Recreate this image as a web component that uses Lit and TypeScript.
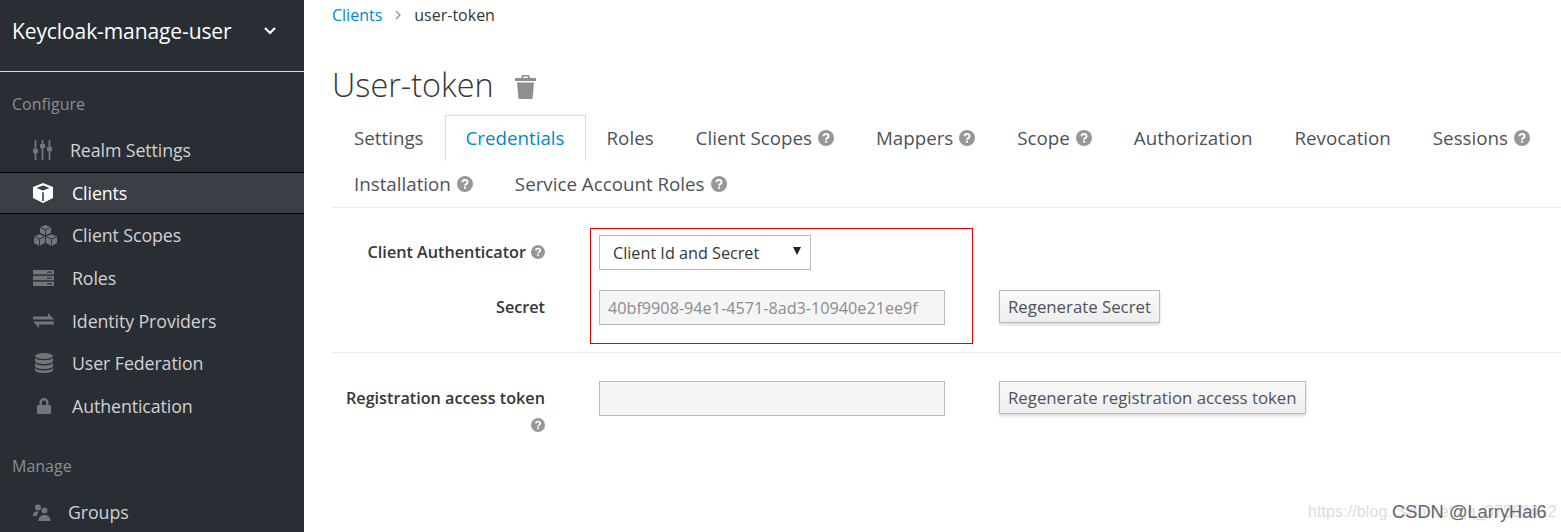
import { LitElement, html, css, svg } from "lit";
import { customElement } from "lit/decorators.js";

const icons: Record<string, any> = {
  sliders: svg`<svg viewBox="0 0 19 20" width="19" height="20"><g fill="currentColor"><rect x="1.6" y="0" width="1.8" height="20"/><rect x="8.6" y="0" width="1.8" height="20"/><rect x="15.6" y="0" width="1.8" height="20"/><rect x="0" y="9" width="5" height="4.2" rx=".6"/><rect x="7" y="4" width="5" height="4.2" rx=".6"/><rect x="14" y="7" width="5" height="4.2" rx=".6"/></g></svg>`,
  cube: svg`<svg viewBox="0 0 20 20" width="20" height="20"><path fill="#fff" d="M10 0 20 4v11L10 20 0 15V4z"/><path fill="#3a3f45" d="M10 2.4 16.6 5 10 7.6 3.4 5z"/><path fill="#3a3f45" d="M9.1 9.2h1.8V18H9.1z" opacity=".9"/></svg>`,
  cubes: svg`<svg viewBox="0 0 25 21" width="25" height="21"><g fill="currentColor"><path d="M12.5 0 18 2.2v5.6l-5.5 2.4L7 7.8V2.2z"/><path d="M6.5 9.2 12 11.4V18l-5.5 3L1 18v-6.600z"/><path d="M18.500 9.200 24 11.400V18l-5.500 3L13 18v-6.600z"/></g><g fill="none" stroke="#292e34" stroke-width=".9"><path d="M7.500 2.600 12.500 4.700 17.500 2.600M12.500 4.700v5"/><path d="M1.500 11.800 6.500 13.900 11.500 11.800M6.500 13.900v6.500"/><path d="M13.500 11.800 18.500 13.900 23.500 11.800M18.500 13.900v6.500"/></g></svg>`,
  server: svg`<svg viewBox="0 0 21 16" width="21" height="16"><g fill="currentColor"><rect width="21" height="4.400"/><rect y="5.800" width="21" height="4.400"/><rect y="11.600" width="21" height="4.400"/></g><g fill="#292e34"><rect x="14" y="1.500" width="5" height="1.200"/><rect x="14" y="7.400" width="5" height="1.200"/><rect x="14" y="13.200" width="5" height="1.200"/></g></svg>`,
  exchange: svg`<svg viewBox="0 0 21 15" width="21" height="15"><g fill="currentColor"><path d="M0 3.500h15V0l6 6.500H0z"/><path d="M21 8.500H0L6 15v-3.500h15z"/></g></svg>`,
  database: svg`<svg viewBox="0 0 18 20" width="18" height="20"><g fill="currentColor"><ellipse cx="9" cy="3" rx="9" ry="3"/><path d="M0 4.800C1.500 6.600 5 7.300 9 7.300s7.500-.7 9-2.500V8c0 1.700-4 3-9 3S0 9.700 0 8z"/><path d="M0 10c1.500 1.800 5 2.500 9 2.500s7.500-.7 9-2.500v3c0 1.700-4 3-9 3s-9-1.300-9-3z"/><path d="M0 15c1.500 1.800 5 2.500 9 2.500s7.500-.7 9-2.500v2c0 1.700-4 3-9 3s-9-1.300-9-3z"/></g></svg>`,
  lock: svg`<svg viewBox="0 0 14 16" width="14" height="16"><path fill="currentColor" d="M2.500 7V4.800C2.500 2.100 4.400 0 7 0s4.500 2.100 4.500 4.800V7H13a1 1 0 0 1 1 1v7a1 1 0 0 1-1 1H1a1 1 0 0 1-1-1V8a1 1 0 0 1 1-1zm2.300 0h4.400V4.800C9.200 3.400 8.300 2.300 7 2.300S4.800 3.400 4.800 4.800z"/></svg>`,
  users: svg`<svg viewBox="0 0 18 17" width="18" height="17"><g fill="currentColor"><circle cx="5" cy="3.500" r="3"/><path d="M0 11c0-2.400 1.800-3.600 4-3.600.8 0 1.300.1 1.800.4C4.600 9 4 10.300 4 12H0z"/><circle cx="11.500" cy="6.500" r="3"/><path d="M5.500 17c0-4 2.500-6 6-6s6 2 6 6z"/></g></svg>`,
};

const help = svg`<svg class="help" viewBox="0 0 16 16"><circle cx="8" cy="8" r="8" fill="#979797"/><path d="M5.500 6.200C5.600 4.700 6.700 4 8 4c1.500 0 2.600.9 2.600 2.200 0 1.900-2.600 1.900-2.600 3.500" fill="none" stroke="#fff" stroke-width="1.900"/><rect x="7" y="10.700" width="2" height="2" fill="#fff"/></svg>`;

const configure = [
  { label: "Realm Settings", icon: "sliders", slot: 37 },
  { label: "Clients", icon: "cube", slot: 39, active: true },
  { label: "Client Scopes", icon: "cubes", slot: 39 },
  { label: "Roles", icon: "server", slot: 39 },
  { label: "Identity Providers", icon: "exchange", slot: 39 },
  { label: "User Federation", icon: "database", slot: 39, inset: 2 },
  { label: "Authentication", icon: "lock", slot: 39, inset: 4 },
];
const tabs = [
  { label: "Settings" },
  { label: "Credentials", active: true },
  { label: "Roles" },
  { label: "Client Scopes", help: true },
  { label: "Mappers", help: true },
  { label: "Scope", help: true },
  { label: "Authorization" },
  { label: "Revocation" },
  { label: "Sessions", help: true },
  { label: "Installation", help: true },
  { label: "Service Account Roles", help: true },
];

@customElement("app-root")
export class AppRoot extends LitElement {
  static styles = css`
    :host { display: block; height: 532px; overflow: hidden; font-family: "Open Sans", "Noto Sans", sans-serif; background: #fff; color: #363636; }
    * { box-sizing: border-box; }
    .page { display: flex; height: 532px; position: relative; }
    .side { width: 304px; flex: none; background: #292e34; color: #d1d1d1; }
    .realm { height: 72px; border-bottom: 1px solid #d8d8d8; display: flex; align-items: center; justify-content: space-between; padding: 0 27px 10px 12px; font-size: 21px; color: #fff; letter-spacing: -.1px; }
    .realm svg { width: 14px; height: 10px; }
    .group { height: 57px; padding: 7px 0 0 12px; display: flex; align-items: center; font-size: 16px; color: #8b8d8f; }
    .group.second { margin-top: 7px; }
    .row { height: 42.6px; display: flex; align-items: center; padding-left: 33px; font-size: 17.8px; letter-spacing: -.1px; color: #d1d1d1; }
    .row.active { background: #393f44; color: #fff; border-top: 1px solid #030303; border-bottom: 1px solid #030303; }
    .slot { flex: none; display: flex; align-items: center; color: #72767b; }
    .main { flex: 1; min-width: 0; padding-left: 28px; }
    .crumb { height: 30px; display: flex; align-items: center; font-size: 16px; color: #363636; }
    .crumb a { color: #0088ce; }
    .crumb .sep { width: 32px; display: flex; justify-content: center; }
    .crumb .sep svg { width: 6px; height: 10px; }
    .title { height: 58px; margin-top: 27px; display: flex; align-items: center; gap: 21px; font-size: 32.4px; font-weight: 300; color: #363636; line-height: 54px; }
    .title span { margin-bottom: 4px; }
    .title svg { width: 21px; height: 24px; margin-top: 2px; }
    .tabs { display: flex; flex-wrap: wrap; padding-left: 1px; border-bottom: 1px solid #ededed; font-size: 18.75px; font-weight: 400; color: #4d5258; height: 93px; align-content: flex-start; }
    .tab { height: 46px; padding: 0 20px 2px; display: flex; align-items: center; gap: 6px; border: 1px solid transparent; border-bottom: 0; border-width: 1px 1px 0; }
    .tab.active { color: #0088ce; border-color: #dcdcdc; }
    .help { width: 16px; height: 16px; flex: none; display: block; }
    .form { display: grid; grid-template-columns: 213px 346px auto; column-gap: 54px; padding-top: 27px; justify-content: start; }
    .label { font-size: 16.2px; font-weight: 600; text-align: right; color: #363636; display: flex; justify-content: flex-end; align-items: center; gap: 5px; flex-wrap: wrap; padding-bottom: 2px; }
    .label .help { width: 14px; height: 14px; }
    .select { width: 212px; height: 35px; border: 1px solid #bbb; background: #fff; display: flex; align-items: center; justify-content: space-between; padding: 0 9px 0 13px; font-size: 16.2px; color: #363636; }
    .arrow { width: 0; height: 0; border-left: 4.500px solid transparent; border-right: 4.500px solid transparent; border-top: 8px solid #222; margin-bottom: 4px; }
    .input { height: 35px; border: 1px solid #bbb; background: #f5f5f5; color: #8b8d8f; font-size: 16.2px; padding: 0 8px; display: flex; align-items: center; }
    .btn { justify-self: start; height: 33px; padding: 0 8px; border: 1px solid #bbb; background: linear-gradient(#fafafa, #ededed); box-shadow: 0 2px 3px rgba(0,0,0,.15); font-size: 16.8px; font-weight: 500; color: #4d5258; display: flex; align-items: center; }
    .gap { grid-column: 1 / -1; height: 20px; }
    .hr { grid-column: 1 / -1; height: 1px; background: #ededed; margin: 27px 0 28px; width: 1229px; }
    .reg { display: block; text-align: right; line-height: 34px; padding-bottom: 0; }
    .reg .help { margin: 3px 0 0 auto; }
    .red { position: absolute; left: 590px; top: 228px; width: 383px; height: 116px; border: 1px solid #e60000; pointer-events: none; }
    .wm { position: absolute; left: 1308px; top: 503px; font-family: "Liberation Sans", sans-serif; font-size: 16px; color: #dcdcdc; white-space: nowrap; letter-spacing: .1px; }
    .csdn { position: absolute; left: 1392px; top: 501px; font-family: "Liberation Sans", sans-serif; font-size: 18.3px; color: #666; white-space: nowrap; }
  `;

  private row(r: any) {
    return html`<div class="row ${r.active ? "active" : ""}">
      <span class="slot" style="width:${r.slot}px;padding-left:${r.inset ?? 0}px">${icons[r.icon]}</span>${r.label}
    </div>`;
  }

  render() {
    return html`<div class="page">
      <nav class="side">
        <div class="realm"><span>Keycloak-manage-user</span>
          <svg viewBox="0 0 14 10"><path d="M2 2l5 5 5-5" fill="none" stroke="#fff" stroke-width="2.200"/></svg></div>
        <div class="group">Configure</div>
        ${configure.map((r) => this.row(r))}
        <div class="group second">Manage</div>
        ${this.row({ label: "Groups", icon: "users", slot: 35 })}
      </nav>
      <main class="main">
        <div class="crumb"><a>Clients</a>
          <span class="sep"><svg viewBox="0 0 6 10"><path d="M1 1l4 4-4 4" fill="none" stroke="#8b8d8f" stroke-width="1.200"/></svg></span>
          <span>user-token</span></div>
        <div class="title"><span>User-token</span>
          <svg viewBox="0 0 21 24"><path fill="#8f8f8f" d="M7 0h7l1 3h6v3H0V3h6zM8.500 1.500 8 3h5l-.5-1.500zM2 7.500h17L17.500 24h-14z"/></svg></div>
        <div class="tabs">
          ${tabs.map((t) => html`<div class="tab ${t.active ? "active" : ""}">${t.label}${t.help ? help : ""}</div>`)}
        </div>
        <div class="form">
          <div class="label">Client Authenticator ${help}</div>
          <div class="select">Client Id and Secret<span class="arrow"></span></div>
          <div></div>
          <div class="gap"></div>
          <div class="label">Secret</div>
          <div class="input">40bf9908-94e1-4571-8ad3-10940e21ee9f</div>
          <div class="btn">Regenerate Secret</div>
          <div class="hr"></div>
          <div class="label reg">Registration access token${help}</div>
          <div class="input"></div>
          <div class="btn">Regenerate registration access token</div>
        </div>
      </main>
      <div class="red"></div>
      <div class="wm">https://blog.csdn.net/qq_37362412</div>
      <div class="csdn">CSDN @LarryHai6</div>
    </div>`;
  }
}
